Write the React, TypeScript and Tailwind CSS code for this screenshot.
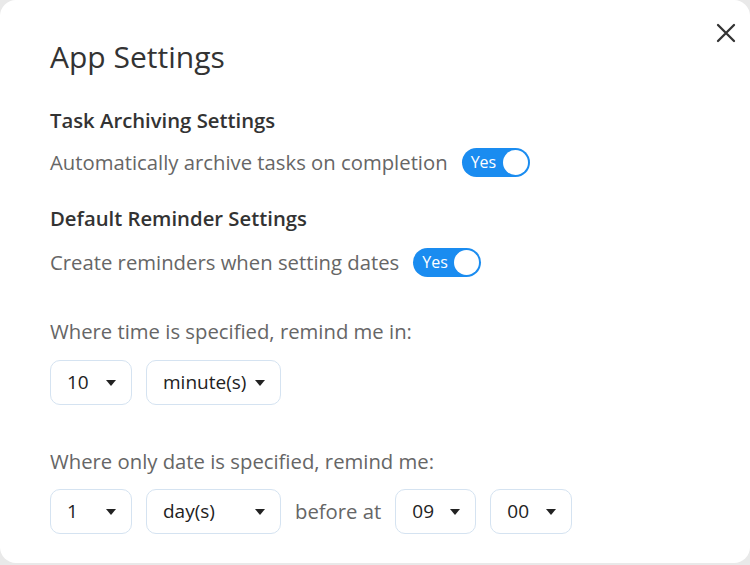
import React from 'react';

function Toggle({ label = 'Yes' }: { label?: string }) {
  return (
    <div className="flex h-[29px] w-[68px] items-center justify-between rounded-full bg-[#1a8cf0] pl-[9px] pr-[2px]">
      <span className="text-[16px] leading-none text-white">{label}</span>
      <span className="h-[25px] w-[25px] rounded-full bg-white" />
    </div>
  );
}

function Select({ value, width }: { value: string; width: string }) {
  return (
    <div
      className={`flex h-[45px] ${width} items-center justify-between rounded-[10px] border border-[#d5e3f1] bg-white pl-[16px] pr-[15px] text-[19px] text-[#222]`}
    >
      <span>{value}</span>
      <svg width="10" height="6" viewBox="0 0 10 6">
        <path d="M0 0 L10 0 L5 6 Z" fill="#222" />
      </svg>
    </div>
  );
}

export default function App() {
  return (
    <div className="h-[565px] w-[750px] bg-[#e9e9e9]" style={{ fontFamily: '"Open Sans", sans-serif' }}>
      <div className="relative h-[563px] w-[750px] rounded-[16px] bg-white px-[50px] pt-[36px]">
        <button className="absolute right-[13px] top-[22px] p-[1px]">
          <svg width="20" height="20" viewBox="0 0 20 20">
            <path d="M2 2 L18 18 M18 2 L2 18" stroke="#333" strokeWidth="2.3" strokeLinecap="round" />
          </svg>
        </button>

        <h1 className="text-[30px] leading-[42px] text-[#333]">App Settings</h1>

        <h2 className="mt-[28px] text-[20.3px] font-semibold leading-[28px] text-[#333]">Task Archiving Settings</h2>
        <div className="mt-[13px] flex h-[30px] items-center gap-[14px]">
          <span className="text-[20.3px] leading-[30px] text-[#666]">Automatically archive tasks on completion</span>
          <Toggle />
        </div>

        <h2 className="mt-[27px] text-[20.3px] font-semibold leading-[28px] text-[#333]">Default Reminder Settings</h2>
        <div className="mt-[15px] flex h-[30px] items-center gap-[14px]">
          <span className="text-[20.3px] leading-[30px] text-[#666]">Create reminders when setting dates</span>
          <Toggle />
        </div>

        <p className="mt-[39px] text-[20.3px] leading-[30px] text-[#666]">Where time is specified, remind me in:</p>
        <div className="mt-[14px] flex items-center gap-[14px]">
          <Select value="10" width="w-[82px]" />
          <Select value="minute(s)" width="w-[135px]" />
        </div>

        <p className="mt-[41px] text-[20.3px] leading-[30px] text-[#666]">Where only date is specified, remind me:</p>
        <div className="mt-[13px] flex items-center gap-[14px]">
          <Select value="1" width="w-[82px]" />
          <Select value="day(s)" width="w-[135px]" />
          <span className="text-[20.3px] text-[#666]">before at</span>
          <Select value="09" width="w-[81px]" />
          <Select value="00" width="w-[82px]" />
        </div>
      </div>
    </div>
  );
}
